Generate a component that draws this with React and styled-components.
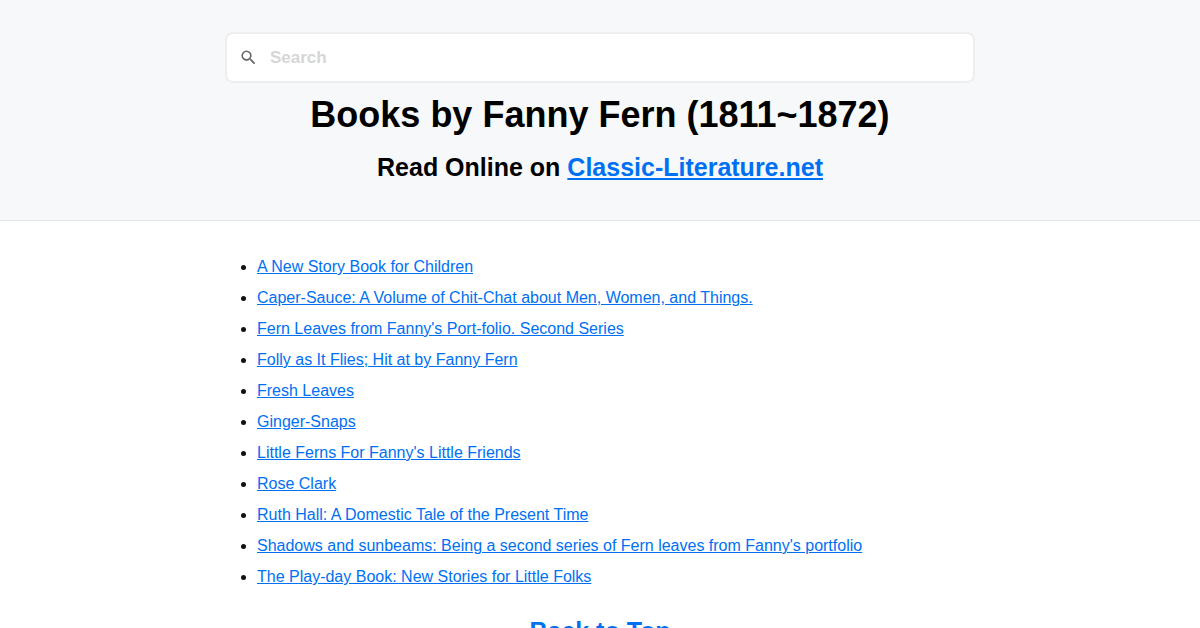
import React from 'react';
import styled, { createGlobalStyle } from 'styled-components';

const GlobalStyle = createGlobalStyle`
    * {
        box-sizing: border-box;
    }

    body {
        margin: 0;
        background-color: #fff;
        color: #111;
        font-family: 'Liberation Sans', Arial, sans-serif;
        font-size: 16px;
    }
`;

const Header = styled.header`
    background-color: #f7f8fa;
    border-bottom: 1px solid #e3e4e6;
    padding: 32px 16px 37px;
`;

const Container = styled.div`
    max-width: 750px;
    margin: 0 auto;
`;

const SearchBox = styled.label`
    display: flex;
    align-items: center;
    gap: 12px;
    padding: 0 12px;
    background-color: #fff;
    border: 2px solid #eee;
    border-radius: 8px;
`;

const SearchIcon = styled.svg`
    width: 19px;
    height: 19px;
    flex: none;
    fill: #666;
`;

const SearchInput = styled.input`
    flex: 1;
    min-width: 0;
    height: 47px;
    padding: 0;
    border: none;
    outline: none;
    background: transparent;
    color: #111;
    font: bold 17px 'Liberation Sans', Arial, sans-serif;

    &::placeholder {
        color: #d6d6d6;
        opacity: 1;
    }
`;

const Title = styled.h1`
    margin: 8px 0 12px;
    color: #000;
    font-size: 36px;
    line-height: 48px;
    text-align: center;
`;

const Subtitle = styled.h2`
    margin: 0;
    color: #000;
    font-size: 25px;
    line-height: 32px;
    text-align: center;
`;

const Link = styled.a`
    color: #0070f3;
    text-decoration: ${({ $plain }) => ($plain ? 'none' : 'underline')};
`;

const Main = styled.main`
    padding: 30px 16px;
`;

const BookList = styled.ul`
    margin: 0 0 23px;
    padding-left: 32px;
`;

const BookItem = styled.li`
    font-size: 16px;
    line-height: 31px;
`;

const books = [
    'A New Story Book for Children',
    'Caper-Sauce: A Volume of Chit-Chat about Men, Women, and Things.',
    "Fern Leaves from Fanny's Port-folio. Second Series",
    'Folly as It Flies; Hit at by Fanny Fern',
    'Fresh Leaves',
    'Ginger-Snaps',
    "Little Ferns For Fanny's Little Friends",
    'Rose Clark',
    'Ruth Hall: A Domestic Tale of the Present Time',
    "Shadows and sunbeams: Being a second series of Fern leaves from Fanny's portfolio",
    'The Play-day Book: New Stories for Little Folks',
];

const App = () => {
    return (
        <>
            <GlobalStyle />
            <Header id="top">
                <Container>
                    <SearchBox>
                        <SearchIcon viewBox="0 0 24 24" aria-hidden="true">
                            <path d="M15.5 14h-.79l-.28-.27A6.471 6.471 0 0 0 16 9.5 6.5 6.5 0 1 0 9.5 16c1.61 0 3.09-.59 4.23-1.57l.27.28v.79l5 4.99L20.49 19l-4.99-5zm-6 0C7.01 14 5 11.99 5 9.5S7.01 5 9.5 5 14 7.01 14 9.5 11.99 14 9.5 14z" />
                        </SearchIcon>
                        <SearchInput type="search" placeholder="Search" aria-label="Search" />
                    </SearchBox>
                    <Title>Books by Fanny Fern (1811~1872)</Title>
                    <Subtitle>
                        Read Online on <Link href="#home">Classic-Literature.net</Link>
                    </Subtitle>
                </Container>
            </Header>
            <Main>
                <Container>
                    <BookList>
                        {books.map((book) => (
                            <BookItem key={book}>
                                <Link href="#book">{book}</Link>
                            </BookItem>
                        ))}
                    </BookList>
                    <Subtitle>
                        <Link href="#top" $plain>Back to Top</Link>
                    </Subtitle>
                </Container>
            </Main>
        </>
    );
};

export default App;
